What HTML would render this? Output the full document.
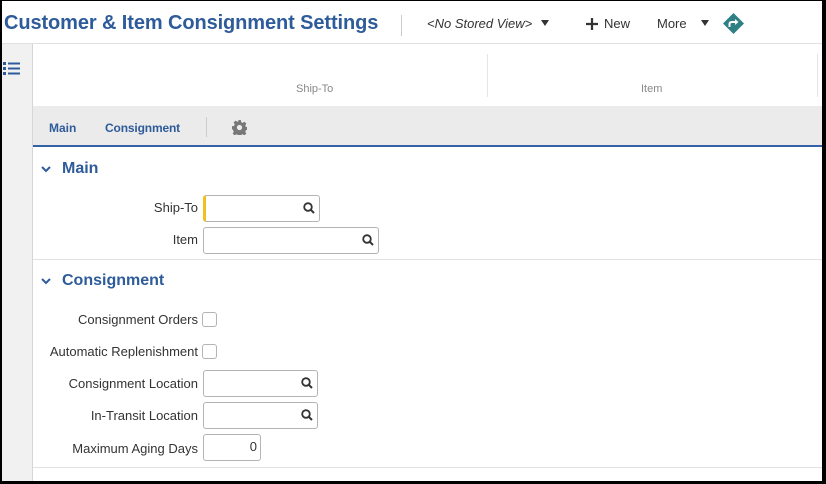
<!DOCTYPE html>
<html><head><meta charset="utf-8"><style>
*{margin:0;padding:0;box-sizing:border-box}
body{width:826px;height:484px;position:relative;overflow:hidden;background:#fff;font-family:"Liberation Sans",sans-serif;color:#333}
.a{position:absolute;white-space:nowrap}
.blue{color:#2e5b9a}
.lbl{position:absolute;right:628px;font-size:13px;color:#333;line-height:16px}
.inp{position:absolute;border:1px solid #b4b4b4;border-radius:3px;background:#fff;height:27px}
.mg{position:absolute;right:4px;top:6px}
.cb{position:absolute;left:202px;width:15px;height:15px;border:1px solid #b4b4b4;border-radius:3px}
.hr{position:absolute;left:33px;width:789px;height:1px;background:#e2e2e2}
</style></head><body>
<div class="a" style="left:0;top:0;width:826px;height:1px;background:#000"></div>
<div class="a" style="left:0;top:0;width:2px;height:484px;background:#000"></div>
<div class="a" style="left:822px;top:0;width:4px;height:484px;background:#000"></div>
<div class="a" style="left:0;top:481px;width:826px;height:3px;background:#000"></div>

<div class="a blue" style="left:4px;top:10px;font-size:20px;font-weight:bold;letter-spacing:-0.1px;line-height:26px">Customer &amp; Item Consignment Settings</div>
<div class="a" style="left:401px;top:15px;width:1px;height:21px;background:#ccc"></div>
<div class="a" style="left:427px;top:16px;font-size:13px;font-style:italic;color:#333">&lt;No Stored View&gt;</div>
<svg class="a" style="left:541px;top:20px" width="8" height="7"><path d="M0 0H8L4 6Z" fill="#333"/></svg>
<svg class="a" style="left:586px;top:18px" width="12" height="12"><path d="M6 0V12M0 6H12" stroke="#333" stroke-width="2.2"/></svg>
<div class="a" style="left:604px;top:16px;font-size:13px;color:#333">New</div>
<div class="a" style="left:657px;top:16px;font-size:13px;color:#333">More</div>
<svg class="a" style="left:701px;top:20px" width="8" height="7"><path d="M0 0H8L4 6Z" fill="#333"/></svg>
<svg class="a" style="left:723px;top:13px" width="21" height="21"><path d="M10.5 0L21 10.5 10.5 21 0 10.5Z" fill="#2e8085"/><path d="M6.5 14V11Q6.5 9 9 9H14" stroke="#fff" stroke-width="2" fill="none"/><path d="M12 6L15.5 9 12 12Z" fill="#fff"/></svg>
<div class="a" style="left:2px;top:43px;width:820px;height:1px;background:#e0e0e0"></div>

<div class="a" style="left:2px;top:44px;width:30px;height:437px;background:#f1f1f1"></div>
<div class="a" style="left:32px;top:44px;width:1px;height:437px;background:#d6d6d6"></div>
<svg class="a" style="left:3px;top:62px" width="18" height="14"><g fill="#2e5b9a"><rect x="0" y="0" width="3" height="3"/><rect x="5" y="0.5" width="12" height="2"/><rect x="0" y="5" width="3" height="3"/><rect x="5" y="5.5" width="12" height="2"/><rect x="0" y="10" width="3" height="3"/><rect x="5" y="10.5" width="12" height="2"/></g></svg>

<div class="a" style="left:487px;top:54px;width:1px;height:43px;background:#e6e6e6"></div>
<div class="a" style="left:817px;top:54px;width:1px;height:43px;background:#e6e6e6"></div>
<div class="a" style="left:296px;top:83px;font-size:11px;color:#888">Ship-To</div>
<div class="a" style="left:641px;top:83px;font-size:11px;color:#888">Item</div>

<div class="a" style="left:33px;top:106px;width:789px;height:39px;background:#ebebeb"></div>
<div class="a" style="left:33px;top:145px;width:789px;height:2px;background:#3461a8"></div>
<div class="a blue" style="left:49px;top:121px;font-size:12px;font-weight:bold">Main</div>
<div class="a blue" style="left:105px;top:121px;font-size:12px;font-weight:bold;letter-spacing:-0.15px">Consignment</div>
<div class="a" style="left:206px;top:117px;width:1px;height:20px;background:#ccc"></div>
<svg class="a" style="left:232px;top:120px" width="15" height="15" viewBox="0 0 16 16"><path fill="#777" d="M6.6 0h2.8l.4 2.2 1.5.8 2-1.2 2 2-1.2 2 .7 1.5 2.2.4v2.8l-2.2.4-.7 1.6 1.2 1.9-2 2-2-1.2-1.5.7-.4 2.2H6.6l-.4-2.2-1.5-.7-2 1.2-2-2 1.2-1.9-.7-1.6L0 9.4V6.6l2.2-.4.7-1.5-1.2-2 2-2 2 1.2 1.5-.8zM8 5.2A2.8 2.8 0 1 0 8 10.8 2.8 2.8 0 1 0 8 5.2z"/></svg>

<svg class="a" style="left:41px;top:166px" width="10" height="7"><path d="M1 1L5 5 9 1" stroke="#2e5b9a" stroke-width="2" fill="none"/></svg>
<div class="a blue" style="left:62px;top:160px;font-size:16px;font-weight:bold">Main</div>
<div class="lbl" style="top:200px">Ship-To</div>
<div class="inp" style="left:203px;top:195px;width:117px;border-left:3px solid #f0c020"><svg class="mg" width="12" height="12"><circle cx="5" cy="5" r="3.8" stroke="#333" stroke-width="1.8" fill="none"/><path d="M7.8 7.8L11 11" stroke="#333" stroke-width="2"/></svg></div>
<div class="lbl" style="top:232px">Item</div>
<div class="inp" style="left:203px;top:227px;width:176px"><svg class="mg" width="12" height="12"><circle cx="5" cy="5" r="3.8" stroke="#333" stroke-width="1.8" fill="none"/><path d="M7.8 7.8L11 11" stroke="#333" stroke-width="2"/></svg></div>
<div class="hr" style="top:259px"></div>

<svg class="a" style="left:41px;top:278px" width="10" height="7"><path d="M1 1L5 5 9 1" stroke="#2e5b9a" stroke-width="2" fill="none"/></svg>
<div class="a blue" style="left:62px;top:272px;font-size:16px;font-weight:bold">Consignment</div>
<div class="lbl" style="top:312px">Consignment Orders</div>
<div class="cb" style="top:312px"></div>
<div class="lbl" style="top:344px">Automatic Replenishment</div>
<div class="cb" style="top:344px"></div>
<div class="lbl" style="top:376px">Consignment Location</div>
<div class="inp" style="left:203px;top:370px;width:115px"><svg class="mg" width="12" height="12"><circle cx="5" cy="5" r="3.8" stroke="#333" stroke-width="1.8" fill="none"/><path d="M7.8 7.8L11 11" stroke="#333" stroke-width="2"/></svg></div>
<div class="lbl" style="top:408px">In-Transit Location</div>
<div class="inp" style="left:203px;top:402px;width:115px"><svg class="mg" width="12" height="12"><circle cx="5" cy="5" r="3.8" stroke="#333" stroke-width="1.8" fill="none"/><path d="M7.8 7.8L11 11" stroke="#333" stroke-width="2"/></svg></div>
<div class="lbl" style="top:441px">Maximum Aging Days</div>
<div class="inp" style="left:203px;top:434px;width:58px;font-size:13px;text-align:right;padding-right:3px;line-height:24px">0</div>
<div class="hr" style="top:467px"></div>
</body></html>
